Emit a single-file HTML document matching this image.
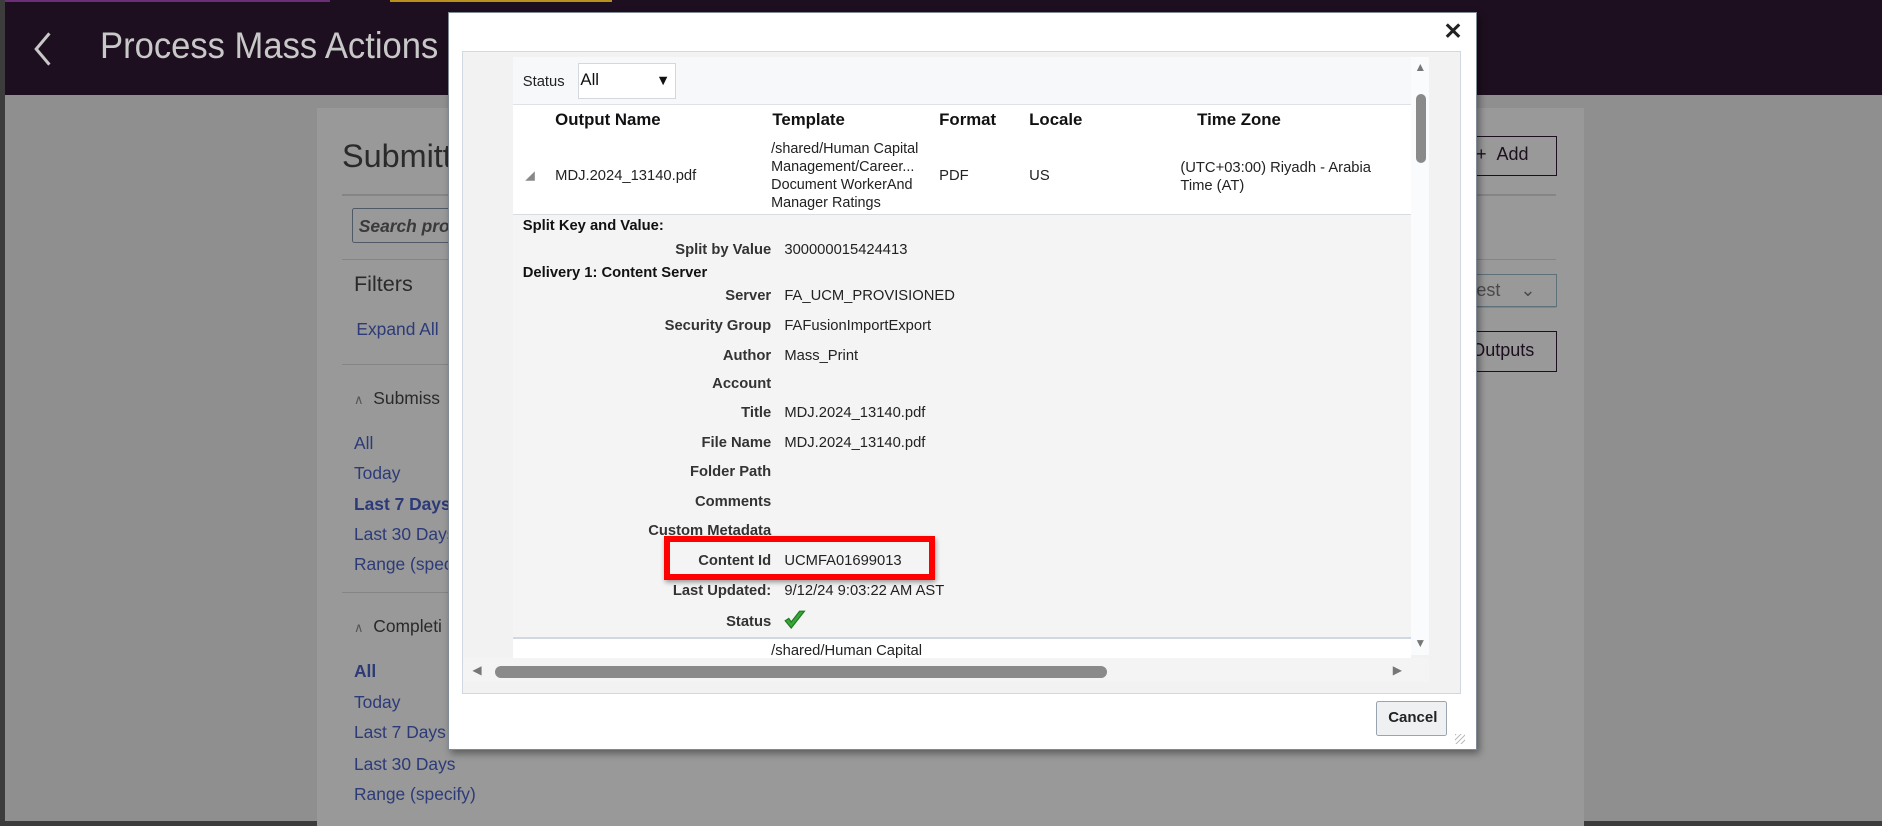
<!DOCTYPE html>
<html><head><meta charset="utf-8"><style>
html,body{margin:0;padding:0;overflow:hidden;width:1882px;height:826px;background:#8f8f8f}
#w{zoom:1.2;position:relative;width:1568px;height:688px;font-family:"Liberation Sans",Arial,sans-serif;overflow:hidden;background:#8f8f8f}
.a{position:absolute;white-space:nowrap}
.hdr{left:0;top:0;width:1568px;height:79px;background:#1d0f1f}
.panel{left:264px;top:90px;width:1056px;height:598px;background:#999}
.ln{position:absolute;height:1px;background:#858585}
.lk{color:#2c3a78;font-size:14.5px}
.ps{color:#2a2a2a}
.dlg{left:373px;top:10px;width:856px;height:613px;background:#fff;border:1px solid #7f8a96;box-shadow:2px 3px 6px rgba(0,0,0,.4)}
.fr{left:11px;top:32px;width:831px;height:534px;background:#f2f2f2;border:1px solid #d2d8e0}
.tb{left:42px;top:4px;width:748px;height:485px;background:#f4f4f4;overflow:hidden}
.t12{font-size:12.3px;color:#222}
.lb{font-size:12.3px;color:#333;font-weight:bold;text-align:right;width:215px}
.th{font-size:14px;font-weight:bold;color:#111}
</style></head><body><div id="w">
<div class="a hdr"></div>
<div class="a" style="left:0;top:0;width:275px;height:2px;background:#6b2f7a"></div>
<div class="a" style="left:325px;top:0;width:185px;height:2px;background:#b8901c"></div>
<svg class="a" style="left:24px;top:26px" width="22" height="30"><path d="M17 2 L6 15 L17 28" stroke="#c8c8c8" stroke-width="2.5" fill="none"/></svg>
<div class="a" style="left:83px;top:20px;font-size:31px;color:#c8c8c8;transform:scaleX(.93);transform-origin:left">Process Mass Actions f</div>
<div class="a" style="left:0;top:0;width:4px;height:688px;background:#3c3c3c"></div>
<div class="a" style="left:0;top:684px;width:1568px;height:4px;background:#3c3c3c"></div>
<div class="a panel">
 <div class="a ps" style="left:21px;top:25px;font-size:27px">Submitt</div>
 <div class="ln" style="left:21px;top:72px;width:1012px"></div>
 <div class="a" style="left:29px;top:83px;width:100px;height:28px;border:1px solid #4f5a66;border-radius:2px"></div>
 <div class="a" style="left:35px;top:90px;font-size:14.5px;font-style:italic;font-weight:bold;color:#3a3a3a">Search proc</div>
 <div class="ln" style="left:21px;top:126px;width:1012px"></div>
 <div class="a ps" style="left:31px;top:136px;font-size:18px">Filters</div>
 <div class="a lk" style="left:33px;top:176px">Expand All</div>
 <div class="ln" style="left:21px;top:213px;width:120px"></div>
 <div class="a ps" style="left:31px;top:233px;font-size:14.5px"><span style="font-size:11px;color:#555">&#x2227;</span>&nbsp; Submiss</div>
 <div class="a lk" style="left:31px;top:271px">All</div>
 <div class="a lk" style="left:31px;top:296px">Today</div>
 <div class="a lk" style="left:31px;top:322px;font-weight:bold">Last 7 Days</div>
 <div class="a lk" style="left:31px;top:347px">Last 30 Days</div>
 <div class="a lk" style="left:31px;top:372px">Range (specify)</div>
 <div class="ln" style="left:21px;top:403px;width:120px"></div>
 <div class="a ps" style="left:31px;top:423px;font-size:14.5px"><span style="font-size:11px;color:#555">&#x2227;</span>&nbsp; Completi</div>
 <div class="a lk" style="left:31px;top:461px;font-weight:bold">All</div>
 <div class="a lk" style="left:31px;top:487px">Today</div>
 <div class="a lk" style="left:31px;top:512px">Last 7 Days</div>
 <div class="a lk" style="left:31px;top:538px">Last 30 Days</div>
 <div class="a lk" style="left:31px;top:563px">Range (specify)</div>
 <div class="a" style="left:940px;top:23px;width:92px;height:32px;border:1px solid #1d0f1f"></div>
 <div class="a" style="left:966px;top:30px;font-size:15px;color:#1d0f1f">+ &nbsp;Add</div>
 <div class="a" style="left:940px;top:138px;width:92px;height:26px;border:1px solid #5e7078"></div>
 <div class="a" style="left:958px;top:143px;font-size:15px;color:#4a4a4a">dest &nbsp;&nbsp;&nbsp;&#x2304;</div>
 <div class="ln" style="left:940px;top:166px;width:93px"></div>
 <div class="a" style="left:940px;top:186px;width:92px;height:32px;border:1px solid #1d0f1f"></div>
 <div class="a" style="left:962px;top:193px;font-size:15px;color:#1d0f1f">Outputs</div>
</div>
<div class="a dlg">
 <div class="a" style="left:829px;top:4px;font-size:19px;font-weight:bold;color:#222">&#x2715;</div>
 <div class="a fr">
  <div class="a tb">
   <div class="a" style="left:0;top:0;width:748px;height:39px;background:#f7f8fa;border-bottom:1px solid #dde2e8"></div>
   <div class="a t12" style="left:8px;top:14px">Status</div>
   <div class="a" style="left:54px;top:5px;width:80px;height:28px;background:#fff;border:1px solid #d4d8de"></div>
   <div class="a" style="left:56px;top:11px;font-size:14px;color:#111">All</div>
   <div class="a" style="left:119px;top:13px;font-size:12px;color:#111">&#x25BC;</div>
   <div class="a" style="left:0;top:40px;width:748px;height:91px;background:#fff;border-bottom:1px solid #d8dde4"></div>
   <div class="a th" style="left:35px;top:44px">Output Name</div>
   <div class="a th" style="left:216px;top:44px">Template</div>
   <div class="a th" style="left:355px;top:44px">Format</div>
   <div class="a th" style="left:430px;top:44px">Locale</div>
   <div class="a th" style="left:570px;top:44px">Time Zone</div>
   <svg class="a" style="left:9px;top:94px" width="10" height="10"><path d="M9 1 L9 9 L1 9 Z" fill="#888"/></svg>
   <div class="a t12" style="left:35px;top:92px">MDJ.2024_13140.pdf</div>
   <div class="a t12" style="left:215px;top:69px;line-height:15px;font-size:12px">/shared/Human Capital<br>Management/Career...<br>Document WorkerAnd<br>Manager Ratings</div>
   <div class="a t12" style="left:355px;top:92px">PDF</div>
   <div class="a t12" style="left:430px;top:92px">US</div>
   <div class="a t12" style="left:556px;top:85px;line-height:15px">(UTC+03:00) Riyadh - Arabia<br>Time (AT)</div>
   <div class="a" style="left:8px;top:134px;font-size:12.3px;font-weight:bold;color:#111">Split Key and Value:</div>
   <div class="a lb" style="left:0;top:154px">Split by Value</div><div class="a t12" style="left:226px;top:154px">300000015424413</div>
   <div class="a" style="left:8px;top:173px;font-size:12.3px;font-weight:bold;color:#111">Delivery 1: Content Server</div>
   <div class="a lb" style="left:0;top:192px">Server</div><div class="a t12" style="left:226px;top:192px">FA_UCM_PROVISIONED</div>
   <div class="a lb" style="left:0;top:217px">Security Group</div><div class="a t12" style="left:226px;top:217px">FAFusionImportExport</div>
   <div class="a lb" style="left:0;top:242px">Author</div><div class="a t12" style="left:226px;top:242px">Mass_Print</div>
   <div class="a lb" style="left:0;top:266px">Account</div>
   <div class="a lb" style="left:0;top:290px">Title</div><div class="a t12" style="left:226px;top:290px">MDJ.2024_13140.pdf</div>
   <div class="a lb" style="left:0;top:315px">File Name</div><div class="a t12" style="left:226px;top:315px">MDJ.2024_13140.pdf</div>
   <div class="a lb" style="left:0;top:339px">Folder Path</div>
   <div class="a lb" style="left:0;top:364px">Comments</div>
   <div class="a lb" style="left:0;top:388px">Custom Metadata</div>
   <div class="a lb" style="left:0;top:413px">Content Id</div><div class="a t12" style="left:226px;top:413px">UCMFA01699013</div>
   <div class="a lb" style="left:0;top:438px">Last Updated:</div><div class="a t12" style="left:226px;top:438px">9/12/24 9:03:22 AM AST</div>
   <div class="a lb" style="left:0;top:464px">Status</div>
   <svg class="a" style="left:226px;top:461px" width="18" height="17"><path d="M1 9 L6 15 L17 1 L13 1 L6 10 L4 7 Z" fill="#3aa53a" stroke="#1f7a1f" stroke-width="1"/></svg>
   <div class="a" style="left:0;top:483px;width:748px;height:2px;background:#d0d8e2"></div>
  </div>
  <div class="a" style="left:42px;top:489px;width:748px;height:16px;background:#fff;overflow:hidden"><div class="a t12" style="left:215px;top:3px">/shared/Human Capital</div></div>
  <div class="a" style="left:0;top:505px;width:805px;height:20px;background:#f4f4f4"></div>
  <div class="a" style="left:790px;top:4px;width:15px;height:498px;background:#fafbfc"></div>
  <div class="a" style="left:793px;top:6px;font-size:10px;color:#777">&#x25B2;</div>
  <div class="a" style="left:794px;top:35px;width:9px;height:57px;background:#8a8a8a;border-radius:5px"></div>
  <div class="a" style="left:793px;top:486px;font-size:10px;color:#777">&#x25BC;</div>
  <div class="a" style="left:8px;top:509px;font-size:10px;color:#777">&#x25C0;</div>
  <div class="a" style="left:27px;top:511px;width:510px;height:10px;background:#8a8a8a;border-radius:5px"></div>
  <div class="a" style="left:775px;top:509px;font-size:10px;color:#777">&#x25B6;</div>
 </div>
 <div class="a" style="left:773px;top:573px;width:57px;height:28px;background:#eef0f2;border:1px solid #9aa4ae;border-radius:2px"></div>
 <div class="a" style="left:783px;top:580px;font-size:12.5px;font-weight:bold;color:#222">Cancel</div>
 <div class="a" style="left:839px;top:601px;width:8px;height:8px;background:repeating-linear-gradient(135deg,#bbb 0 1px,transparent 1px 3px)"></div>
</div>
<div class="a" style="left:553px;top:447px;width:216px;height:26px;border:5px solid #f00;box-shadow:1px 2px 4px rgba(0,0,0,.4)"></div>
</div></body></html>
